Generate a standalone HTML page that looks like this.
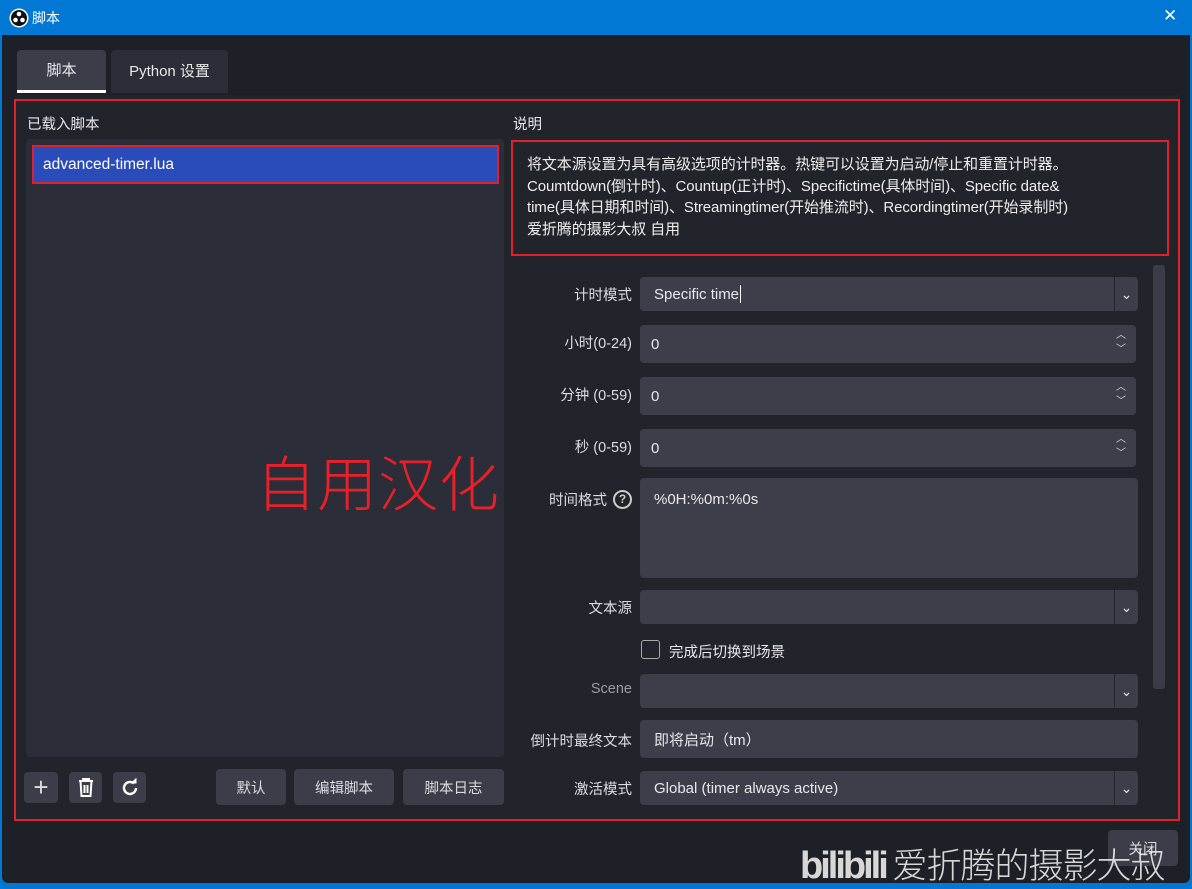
<!DOCTYPE html><html><head><meta charset="utf-8"><style>
*{box-sizing:border-box;margin:0;padding:0}
body{width:1192px;height:885px;overflow:hidden;background:#0078d4;font-family:"Liberation Sans","Noto Sans CJK SC",sans-serif;color:#e8e8ec;font-size:14px;position:relative}
.a{position:absolute}
.win{left:2px;top:35px;width:1188px;height:848px;background:#1e2028;border-radius:0 0 6px 6px}
.inp{background:#3c3e4a;border-radius:4px}
.lbl{right:560px;text-align:right;white-space:nowrap;font-size:14.5px;color:#dcdce2}
.dd{position:absolute;right:0;top:0;bottom:0;width:24px;border-left:1px solid #24262e;display:flex;align-items:center;justify-content:center}
.val{position:absolute;left:14px;top:0;bottom:0;display:flex;align-items:center;font-size:15px}
.sp{position:absolute;right:10px;top:4px;font-size:10px;line-height:14px;color:#ddd}
.btn{background:#3b3d48;border-radius:4px;display:flex;align-items:center;justify-content:center;color:#dcdce2;font-size:14.5px}
</style></head><body>
<div class="a" style="left:0;top:0;width:1192px;height:35px;background:#0078d4"></div>
<svg class="a" style="left:9px;top:8px" width="20" height="20" viewBox="0 0 20 20"><circle cx="10" cy="10" r="9.5" fill="#fff"/><circle cx="10" cy="10" r="8" fill="#111"/><circle cx="10" cy="6" r="2.3" fill="#fff"/><circle cx="6.5" cy="12" r="2.3" fill="#fff"/><circle cx="13.5" cy="12" r="2.3" fill="#fff"/></svg>
<div class="a" style="left:32px;top:8px;color:#fff;font-size:14px">脚本</div>
<div class="a" style="left:1163px;top:6px;color:#fff;font-size:17px">✕</div>
<div class="a win"></div>
<div class="a" style="left:17px;top:50px;width:89px;height:43px;background:#3b3d48;border-radius:4px 4px 0 0;text-align:center;line-height:42px;font-size:15px">脚本</div>
<div class="a" style="left:17px;top:90px;width:89px;height:3px;background:#fff"></div>
<div class="a" style="left:111px;top:50px;width:117px;height:43px;background:#2b2d37;border-radius:4px 4px 0 0;text-align:center;line-height:44px;font-size:15px">Python 设置</div>
<div class="a" style="left:14px;top:95px;width:1166px;height:726px;background:#22242c"></div>
<div class="a" style="left:14px;top:99px;width:1166px;height:722px;border:2px solid #e0202a"></div>
<div class="a" style="left:27px;top:113px;font-size:14.5px">已载入脚本</div>
<div class="a" style="left:26px;top:139px;width:478px;height:618px;background:#2b2d38;border-radius:4px"></div>
<div class="a" style="left:32px;top:145px;width:467px;height:39px;background:#2a4bba;border:2px solid #e0202a;padding-left:9px;line-height:36px;font-size:15.5px;color:#fff">advanced-timer.lua</div>
<div class="a" style="left:256px;top:437px;font-size:60px;color:#e8202a;font-family:'Noto Sans CJK SC',sans-serif;font-weight:300;letter-spacing:1px">自用汉化</div>
<div class="a" style="left:513px;top:113px;font-size:14.5px">说明</div>
<div class="a" style="left:511px;top:140px;width:658px;height:116px;border:2px solid #e0202a;padding:12px 0 0 14px;font-size:15px;line-height:21.5px;color:#eee;white-space:nowrap;letter-spacing:-0.1px">将文本源设置为具有高级选项的计时器。热键可以设置为启动/停止和重置计时器。<br>Coumtdown(倒计时)、Countup(正计时)、Specifictime(具体时间)、Specific date&amp;<br>time(具体日期和时间)、Streamingtimer(开始推流时)、Recordingtimer(开始录制时)<br>爱折腾的摄影大叔 自用</div>
<div class="a" style="left:1153px;top:265px;width:12px;height:424px;background:#3a3c47;border-radius:3px"></div>
<div class="a lbl" style="top:284px">计时模式</div>
<div class="a inp" style="left:640px;top:277px;width:498px;height:34px"><div class="val">Specific time<span style="border-left:1px solid #fff;height:18px;margin-left:1px"></span></div><div class="dd">⌄</div></div>
<div class="a lbl" style="top:332px">小时(0-24)</div>
<div class="a inp" style="left:640px;top:325px;width:496px;height:38px"><div class="val" style="left:11px">0</div><div class="sp">︿<br>﹀</div></div>
<div class="a lbl" style="top:384px">分钟 (0-59)</div>
<div class="a inp" style="left:640px;top:377px;width:496px;height:38px"><div class="val" style="left:11px">0</div><div class="sp">︿<br>﹀</div></div>
<div class="a lbl" style="top:436px">秒 (0-59)</div>
<div class="a inp" style="left:640px;top:429px;width:496px;height:38px"><div class="val" style="left:11px">0</div><div class="sp">︿<br>﹀</div></div>
<div class="a lbl" style="top:489px;right:585px">时间格式</div>
<div class="a" style="left:613px;top:490px;width:19px;height:19px;border:2px solid #ccc;border-radius:50%;font-size:12px;font-weight:bold;text-align:center;line-height:15px;color:#ccc">?</div>
<div class="a inp" style="left:640px;top:478px;width:498px;height:100px"><div class="a" style="left:14px;top:13px;font-size:15px">%0H:%0m:%0s</div></div>
<div class="a lbl" style="top:597px">文本源</div>
<div class="a inp" style="left:640px;top:590px;width:498px;height:34px"><div class="dd">⌄</div></div>
<div class="a" style="left:641px;top:640px;width:19px;height:19px;border:1.5px solid #aaa;border-radius:3px"></div>
<div class="a" style="left:669px;top:641px;font-size:14.5px">完成后切换到场景</div>
<div class="a lbl" style="top:681px;color:#9a9ca4">Scene</div>
<div class="a inp" style="left:640px;top:674px;width:498px;height:34px"><div class="dd">⌄</div></div>
<div class="a lbl" style="top:730px">倒计时最终文本</div>
<div class="a inp" style="left:640px;top:720px;width:498px;height:38px"><div class="val">即将启动（tm）</div></div>
<div class="a lbl" style="top:778px">激活模式</div>
<div class="a inp" style="left:640px;top:771px;width:498px;height:34px"><div class="val">Global (timer always active)</div><div class="dd">⌄</div></div>
<div class="a btn" style="left:24px;top:772px;width:34px;height:31px;font-size:26px;font-weight:300">+</div>
<div class="a btn" style="left:69px;top:772px;width:33px;height:31px"><svg width="16" height="19" viewBox="0 0 16 19" fill="none" stroke="#fff" stroke-width="2"><path d="M1 3h14M5 3V1h6v2M2.5 3l1 15h9l1-15M6.5 7v8M9.5 7v8"/></svg></div>
<div class="a btn" style="left:113px;top:772px;width:33px;height:31px"><svg width="20" height="20" viewBox="0 0 20 20" fill="none" stroke="#fff" stroke-width="2.4"><path d="M16 10a6 6 0 1 1-2-4.5"/><path d="M10.5 5.5h6v-6z" fill="#fff" stroke="none"/></svg></div>
<div class="a btn" style="left:216px;top:769px;width:70px;height:36px">默认</div>
<div class="a btn" style="left:294px;top:769px;width:100px;height:36px">编辑脚本</div>
<div class="a btn" style="left:403px;top:769px;width:101px;height:36px">脚本日志</div>
<div class="a btn" style="left:1108px;top:830px;width:70px;height:36px">关闭</div>
<div class="a" style="left:800px;top:838px;font-size:35px;color:rgba(235,235,235,0.9);white-space:nowrap;font-family:'Noto Sans CJK SC',sans-serif;font-weight:300;letter-spacing:-1px"><span style="font-family:'Liberation Sans',sans-serif;font-weight:bold;font-size:38px;letter-spacing:-3px">bilibili</span> 爱折腾的摄影大叔</div>
</body></html>
